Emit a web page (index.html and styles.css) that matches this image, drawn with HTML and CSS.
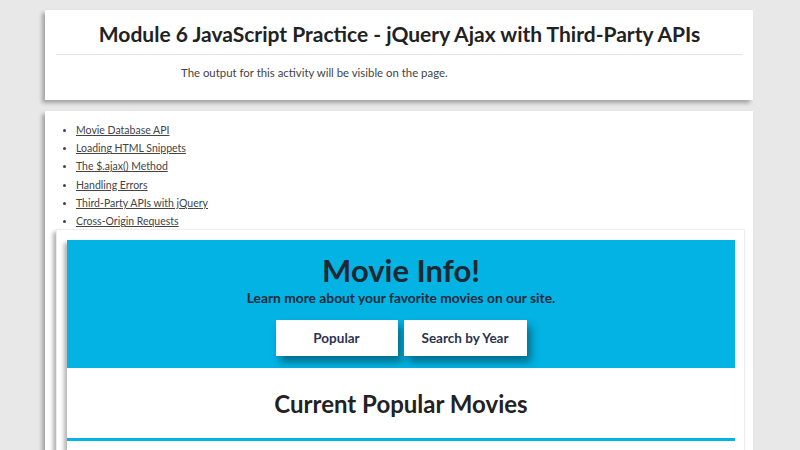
FILE: index.html
```html
<!DOCTYPE html>
<html>
<head>
<meta charset="utf-8">
<link rel="stylesheet" href="styles.css">
</head>
<body>
<div class="page">
  <section class="card header-card">
    <h1 class="page-title">Module 6 JavaScript Practice - jQuery Ajax with Third-Party APIs</h1>
    <hr class="rule">
    <p class="note">The output for this activity will be visible on the page.</p>
  </section>
  <section class="card main-card">
    <ul class="links">
      <li><a href="#">Movie Database API</a></li>
      <li><a href="#">Loading HTML Snippets</a></li>
      <li><a href="#">The $.ajax() Method</a></li>
      <li><a href="#">Handling Errors</a></li>
      <li><a href="#">Third-Party APIs with jQuery</a></li>
      <li><a href="#">Cross-Origin Requests</a></li>
    </ul>
    <div class="output">
      <div class="app">
        <header class="hero">
          <h2 class="hero-title">Movie Info!</h2>
          <p class="hero-sub">Learn more about your favorite movies on our site.</p>
          <div class="buttons">
            <button class="btn">Popular</button>
            <button class="btn">Search by Year</button>
          </div>
        </header>
        <div class="content">
          <h3 class="section-title">Current Popular Movies</h3>
          <div class="blue-line"></div>
          <div class="list-area"></div>
        </div>
      </div>
    </div>
  </section>
</div>
</body>
</html>
```
FILE: styles.css
```css
* { box-sizing: border-box; }
html, body { margin: 0; padding: 0; }
body {
  background: #e8e8e8;
  font-family: Lato, "Open Sans", sans-serif;
  color: #222;
  height: 450px;
  overflow: hidden;
}
.page {
  padding: 10px 47px 0 45px;
  display: flex;
  flex-direction: column;
  gap: 11px;
}
.card {
  background: #fff;
  box-shadow: -3px 3px 4px rgba(0, 0, 0, 0.3);
}
.header-card {
  height: 90px;
  padding: 11px 10px 0 11px;
}
.page-title {
  margin: 0;
  text-align: center;
  font-size: 21px;
  font-weight: 700;
  line-height: 26px;
  color: #222;
}
.rule {
  margin: 7px 0 0 0;
  border: 0;
  border-top: 1px solid #e2e2e2;
}
.note {
  margin: 10px 0 0 125px;
  font-size: 11.4px;
  line-height: 16px;
  color: #444;
}
.main-card {
  height: 360px;
  padding: 10px 8px 0 11px;
}
.links {
  margin: 0;
  padding: 0 0 0 20px;
  list-style: disc;
  font-size: 10.5px;
  line-height: 18.2px;
  color: #444;
}
.links li::marker { font-size: 9px; }
.links a { color: #444; text-decoration: underline; }
.output {
  margin-top: -1px;
  border: 1px solid #eeeeee;
  box-shadow: -3px 3px 4px rgba(0, 0, 0, 0.3);
  padding: 10px 9px 0 10px;
  height: 240px;
}
.app {
  box-shadow: -3px 3px 4px rgba(0, 0, 0, 0.3);
  background: #fff;
  height: 230px;
}
.hero {
  background: #02b3e4;
  height: 128px;
  padding-top: 11px;
  text-align: center;
  display: flex;
  flex-direction: column;
  align-items: center;
}
.hero-title {
  margin: 0;
  font-size: 31px;
  line-height: 38px;
  font-weight: 700;
  color: #1d2833;
}
.hero-sub {
  margin: 1px 0 0 0;
  font-size: 13.8px;
  line-height: 16px;
  font-weight: 700;
  color: #1d2a3a;
}
.buttons {
  display: flex;
  gap: 6px;
  margin-top: 14px;
}
.btn {
  width: 122px;
  height: 36px;
  border: 0;
  background: #fff;
  font-family: inherit;
  font-size: 13.5px;
  font-weight: 700;
  color: #2b3350;
  box-shadow: 4px 6px 8px rgba(0, 0, 0, 0.4);
}
.btn + .btn { width: 123px; }
.content {
  text-align: center;
}
.section-title {
  margin: 0;
  padding-top: 22px;
  font-size: 24px;
  line-height: 28px;
  font-weight: 700;
  color: #222;
}
.blue-line {
  margin-top: 20px;
  height: 3px;
  background: #02b3e4;
}
```
